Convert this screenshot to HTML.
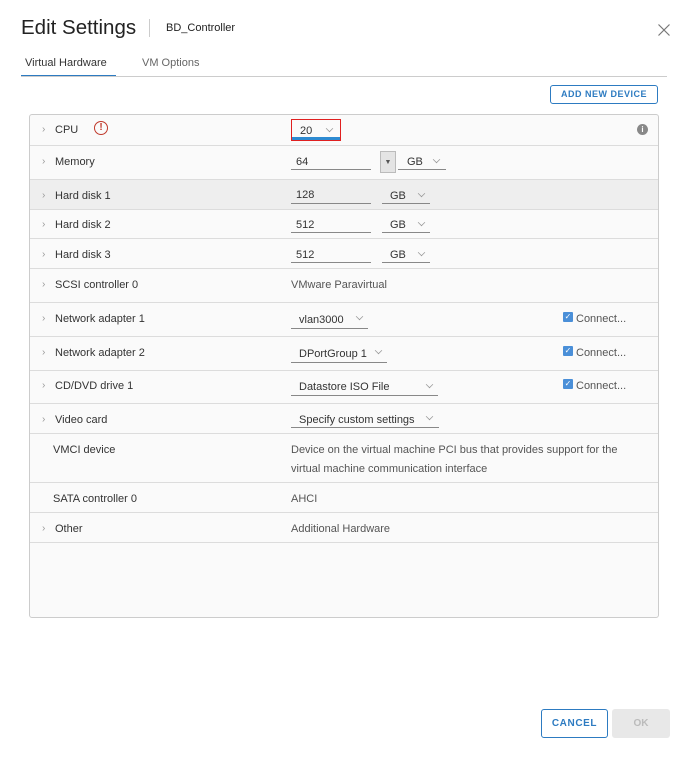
<!DOCTYPE html>
<html><head><style>
*{margin:0;padding:0;box-sizing:border-box}
body{width:689px;height:757px;background:#fff;font-family:"Liberation Sans",sans-serif;color:#333;position:relative;overflow:hidden}
.a{position:absolute;white-space:nowrap}
.t{font-size:11px;line-height:12px;margin-top:1px}
.row{position:absolute;left:30px;width:628px;border-bottom:1px solid #dcdcdc}
.chev{position:absolute;color:#999;font-size:10px;margin-top:1px}
.ul{position:absolute;border-bottom:1px solid #888;height:1px}
.dd{position:absolute;width:7px;height:7px;border-right:1px solid #999;border-bottom:1px solid #999;transform:rotate(45deg) scale(.75)}
.cb{position:absolute;width:10px;height:10px;background:#4a8fd8;border-radius:1px;color:#fff;font-size:8px;line-height:10px;text-align:center}
</style></head><body>
<div class="a" style="left:21px;top:16px;font-size:20.5px;color:#222">Edit Settings</div>
<div class="a" style="left:149px;top:19px;width:1px;height:18px;background:#ccc"></div>
<div class="a t" style="left:166px;top:21px;color:#222">BD_Controller</div>
<svg class="a" style="left:658px;top:24px" width="12" height="12"><path d="M0.5 0.5L11.5 11.5M11.5 0.5L0.5 11.5" stroke="#777" stroke-width="1.2"/></svg>
<div class="a t" style="left:25px;top:56px;color:#333">Virtual Hardware</div>
<div class="a t" style="left:142px;top:56px;color:#666">VM Options</div>
<div class="a" style="left:21px;top:75px;width:95px;height:2px;background:#2d7bc1"></div>
<div class="a" style="left:21px;top:76px;width:646px;height:1px;background:#ccc"></div>
<div class="a" style="left:550px;top:85px;width:108px;height:19px;border:1px solid #2d7bc1;border-radius:3px;color:#2d7bc1;font-size:9px;font-weight:bold;text-align:center;line-height:17px;letter-spacing:.5px">ADD NEW DEVICE</div>

<div class="a" style="left:29px;top:114px;width:630px;height:504px;border:1px solid #ccc;border-radius:3px;background:#fafafa"></div>
<div class="row" style="top:115px;height:31px"></div>
<div class="row" style="top:146px;height:34px"></div>
<div class="row" style="top:180px;height:30px;background:#eee"></div>
<div class="row" style="top:210px;height:29px"></div>
<div class="row" style="top:239px;height:30px"></div>
<div class="row" style="top:269px;height:34px"></div>
<div class="row" style="top:303px;height:34px"></div>
<div class="row" style="top:337px;height:34px"></div>
<div class="row" style="top:371px;height:33px"></div>
<div class="row" style="top:404px;height:30px"></div>
<div class="row" style="top:434px;height:49px"></div>
<div class="row" style="top:483px;height:30px"></div>
<div class="row" style="top:513px;height:30px"></div>

<div class="chev" style="left:42px;top:123px">›</div><div class="a t" style="left:55px;top:123px">CPU</div>
<div class="a" style="left:94px;top:121px;width:14px;height:14px;border:1.5px solid #c0392b;border-radius:50%;color:#c0392b;font-size:10px;font-weight:bold;text-align:center;line-height:11px">!</div>
<div class="a" style="left:291px;top:119px;width:50px;height:22px;border:1px solid #e02020"></div>
<div class="a" style="left:292px;top:137px;width:48px;height:3px;background:#2d8ad1"></div>
<div class="a t" style="left:300px;top:124px">20</div><div class="dd" style="left:326px;top:125px"></div>
<div class="a" style="left:637px;top:124px;width:11px;height:11px;border-radius:50%;background:#888;color:#fff;font-size:8px;text-align:center;line-height:11px;font-weight:bold">i</div>

<div class="chev" style="left:42px;top:155px">›</div><div class="a t" style="left:55px;top:155px">Memory</div>
<div class="a t" style="left:296px;top:155px">64</div><div class="ul" style="left:291px;top:169px;width:80px"></div>
<div class="a" style="left:380px;top:151px;width:16px;height:22px;background:#e4e4e4;border:1px solid #bbb;font-size:7px;text-align:center;line-height:22px;color:#555">▼</div>
<div class="a t" style="left:407px;top:155px">GB</div><div class="dd" style="left:433px;top:156px"></div><div class="ul" style="left:398px;top:169px;width:48px"></div>

<div class="chev" style="left:42px;top:189px">›</div><div class="a t" style="left:55px;top:189px">Hard disk 1</div>
<div class="a t" style="left:296px;top:188px">128</div><div class="ul" style="left:291px;top:203px;width:80px"></div>
<div class="a t" style="left:390px;top:189px">GB</div><div class="dd" style="left:418px;top:190px"></div><div class="ul" style="left:382px;top:203px;width:48px"></div>

<div class="chev" style="left:42px;top:218px">›</div><div class="a t" style="left:55px;top:218px">Hard disk 2</div>
<div class="a t" style="left:296px;top:218px">512</div><div class="ul" style="left:291px;top:232px;width:80px"></div>
<div class="a t" style="left:390px;top:218px">GB</div><div class="dd" style="left:418px;top:219px"></div><div class="ul" style="left:382px;top:232px;width:48px"></div>

<div class="chev" style="left:42px;top:248px">›</div><div class="a t" style="left:55px;top:248px">Hard disk 3</div>
<div class="a t" style="left:296px;top:248px">512</div><div class="ul" style="left:291px;top:262px;width:80px"></div>
<div class="a t" style="left:390px;top:248px">GB</div><div class="dd" style="left:418px;top:249px"></div><div class="ul" style="left:382px;top:262px;width:48px"></div>

<div class="chev" style="left:42px;top:278px">›</div><div class="a t" style="left:55px;top:278px">SCSI controller 0</div>
<div class="a t" style="left:291px;top:278px;color:#555">VMware Paravirtual</div>

<div class="chev" style="left:42px;top:312px">›</div><div class="a t" style="left:55px;top:312px">Network adapter 1</div>
<div class="a t" style="left:299px;top:313px">vlan3000</div><div class="dd" style="left:356px;top:313px"></div><div class="ul" style="left:291px;top:328px;width:77px"></div>
<div class="cb" style="left:563px;top:312px">✓</div><div class="a t" style="left:576px;top:312px;color:#555">Connect...</div>

<div class="chev" style="left:42px;top:346px">›</div><div class="a t" style="left:55px;top:346px">Network adapter 2</div>
<div class="a t" style="left:299px;top:347px">DPortGroup 1</div><div class="dd" style="left:375px;top:347px"></div><div class="ul" style="left:291px;top:362px;width:96px"></div>
<div class="cb" style="left:563px;top:346px">✓</div><div class="a t" style="left:576px;top:346px;color:#555">Connect...</div>

<div class="chev" style="left:42px;top:379px">›</div><div class="a t" style="left:55px;top:379px">CD/DVD drive 1</div>
<div class="a t" style="left:299px;top:380px">Datastore ISO File</div><div class="dd" style="left:426px;top:381px"></div><div class="ul" style="left:291px;top:395px;width:147px"></div>
<div class="cb" style="left:563px;top:379px">✓</div><div class="a t" style="left:576px;top:379px;color:#555">Connect...</div>

<div class="chev" style="left:42px;top:413px">›</div><div class="a t" style="left:55px;top:413px">Video card</div>
<div class="a t" style="left:299px;top:413px">Specify custom settings</div><div class="dd" style="left:426px;top:413px"></div><div class="ul" style="left:291px;top:427px;width:148px"></div>

<div class="a t" style="left:53px;top:443px">VMCI device</div>
<div class="a t" style="left:291px;top:443px;color:#555">Device on the virtual machine PCI bus that provides support for the</div>
<div class="a t" style="left:291px;top:462px;color:#555">virtual machine communication interface</div>

<div class="a t" style="left:53px;top:492px">SATA controller 0</div>
<div class="a t" style="left:291px;top:492px;color:#555">AHCI</div>

<div class="chev" style="left:42px;top:522px">›</div><div class="a t" style="left:55px;top:522px">Other</div>
<div class="a t" style="left:291px;top:522px;color:#555">Additional Hardware</div>

<div class="a" style="left:541px;top:709px;width:67px;height:29px;border:1px solid #2d7bc1;border-radius:3px;color:#2d7bc1;font-size:10px;font-weight:bold;text-align:center;line-height:27px;letter-spacing:.6px">CANCEL</div>
<div class="a" style="left:612px;top:709px;width:58px;height:29px;background:#e8e8e8;border-radius:3px;color:#bbb;font-size:10px;font-weight:bold;text-align:center;line-height:29px">OK</div>
</body></html>
